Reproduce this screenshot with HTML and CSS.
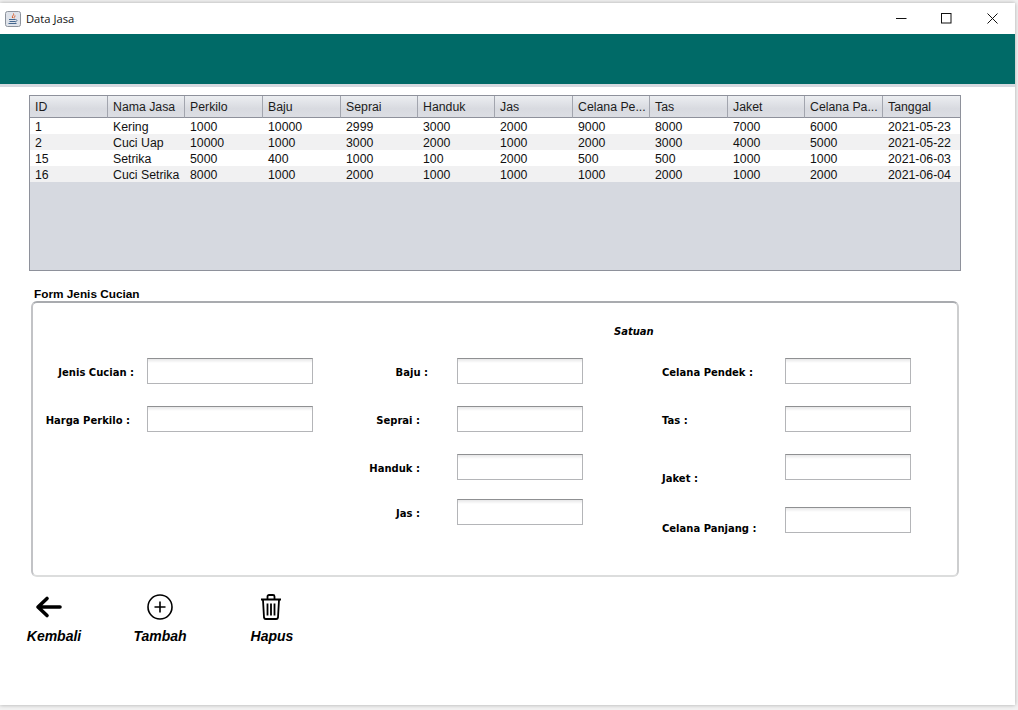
FILE: index.html
```html
<!DOCTYPE html>
<html lang="id">
<head>
<meta charset="utf-8">
<title>Data Jasa</title>
<link rel="stylesheet" href="styles.css">
</head>
<body>
<div class="window">
  <header class="titlebar">
    <svg class="app-icon" width="16" height="16" viewBox="0 0 16 16">
      <rect x="0.5" y="0.5" width="15" height="15" rx="2" fill="#dfe3ea" stroke="#8d939c"/>
      <path d="M8.5 2.5c1 1.5-2 2.5-1 4.5M10 4.5c.5 1-1.500 1.500-.8 2.800" fill="none" stroke="#d9541e" stroke-width="1"/>
      <path d="M4 8.500h6.500M4.500 10.500h6M3.500 12.500h8" fill="none" stroke="#44678f" stroke-width="1"/>
      <path d="M10.500 8.500c2 0 2 2-.5 2.500" fill="none" stroke="#44678f" stroke-width=".8"/>
    </svg>
    <span class="title-text">Data Jasa</span>
    <div class="controls">
      <svg class="ctl ctl-min" width="11" height="11" viewBox="0 0 11 11"><path d="M0 5.500h10.500" stroke="#111" stroke-width="1" fill="none"/></svg>
      <svg class="ctl ctl-max" width="11" height="11" viewBox="0 0 11 11"><rect x="0.500" y="0.500" width="9.500" height="9.500" stroke="#111" stroke-width="1" fill="none"/></svg>
      <svg class="ctl ctl-close" width="11" height="11" viewBox="0 0 11 11"><path d="M.5.500l10 10M10.500.500l-10 10" stroke="#111" stroke-width="1" fill="none"/></svg>
    </div>
  </header>
  <div class="banner"></div>
  <main class="content">
    <div class="table-wrap">
      <table class="data">
        <colgroup>
          <col class="w78"><col class="w77"><col class="w78"><col class="w78"><col class="w77"><col class="w77"><col class="w78"><col class="w77"><col class="w78"><col class="w77"><col class="w78"><col class="w77">
        </colgroup>
        <thead>
          <tr><th>ID</th><th>Nama Jasa</th><th>Perkilo</th><th>Baju</th><th>Seprai</th><th>Handuk</th><th>Jas</th><th>Celana Pe...</th><th>Tas</th><th>Jaket</th><th>Celana Pa...</th><th>Tanggal</th></tr>
        </thead>
        <tbody>
          <tr><td>1</td><td>Kering</td><td>1000</td><td>10000</td><td>2999</td><td>3000</td><td>2000</td><td>9000</td><td>8000</td><td>7000</td><td>6000</td><td>2021-05-23</td></tr>
          <tr><td>2</td><td>Cuci Uap</td><td>10000</td><td>1000</td><td>3000</td><td>2000</td><td>1000</td><td>2000</td><td>3000</td><td>4000</td><td>5000</td><td>2021-05-22</td></tr>
          <tr><td>15</td><td>Setrika</td><td>5000</td><td>400</td><td>1000</td><td>100</td><td>2000</td><td>500</td><td>500</td><td>1000</td><td>1000</td><td>2021-06-03</td></tr>
          <tr><td>16</td><td>Cuci Setrika</td><td>8000</td><td>1000</td><td>2000</td><td>1000</td><td>1000</td><td>1000</td><td>2000</td><td>1000</td><td>2000</td><td>2021-06-04</td></tr>
        </tbody>
      </table>
    </div>

    <h2 class="form-title">Form Jenis Cucian</h2>
    <section class="panel">
      <div class="satuan">Satuan</div>
      <div class="fields">
        <div class="col col-a">
          <div class="row"><label class="lbl lbl-jenis">Jenis Cucian :</label><input class="inp inp-wide" type="text"></div>
          <div class="row"><label class="lbl lbl-harga">Harga Perkilo :</label><input class="inp inp-wide" type="text"></div>
        </div>
        <div class="col col-b">
          <div class="row"><label class="lbl lbl-baju">Baju :</label><input class="inp" type="text"></div>
          <div class="row"><label class="lbl lbl-mid">Seprai :</label><input class="inp" type="text"></div>
          <div class="row"><label class="lbl lbl-mid">Handuk :</label><input class="inp" type="text"></div>
          <div class="row row-jas"><label class="lbl lbl-mid">Jas :</label><input class="inp" type="text"></div>
        </div>
        <div class="col col-c">
          <div class="row"><label class="lbl">Celana Pendek :</label><input class="inp" type="text"></div>
          <div class="row"><label class="lbl">Tas :</label><input class="inp" type="text"></div>
          <div class="row"><label class="lbl lbl-low">Jaket :</label><input class="inp" type="text"></div>
          <div class="row row-panjang"><label class="lbl lbl-lower">Celana Panjang :</label><input class="inp" type="text"></div>
        </div>
      </div>
    </section>

    <div class="actions">
      <button class="action act-back" type="button">
        <svg width="28" height="24" viewBox="0 0 28 24"><path d="M26 12H5M13 3.500l-9 8.500 9 8.500" fill="none" stroke="#000" stroke-width="3.600" stroke-linecap="round" stroke-linejoin="round"/></svg>
        <span>Kembali</span>
      </button>
      <button class="action act-add" type="button">
        <svg width="26" height="26" viewBox="0 0 26 26"><circle cx="13" cy="13" r="12" fill="none" stroke="#000" stroke-width="1.600"/><path d="M13 7.500v11M7.500 13h11" fill="none" stroke="#000" stroke-width="1.600"/></svg>
        <span>Tambah</span>
      </button>
      <button class="action act-del" type="button">
        <svg width="22" height="26" viewBox="0 0 22 26"><path d="M1 5.500h20M7.500 5V2.500a1.500 1.500 0 0 1 1.500-1.500h4a1.500 1.500 0 0 1 1.500 1.500V5" fill="none" stroke="#000" stroke-width="1.800"/><path d="M3 6l1 17.500a1.800 1.800 0 0 0 1.800 1.500h10.400a1.800 1.800 0 0 0 1.800-1.500L19 6" fill="none" stroke="#000" stroke-width="1.800"/><path d="M7.500 9.500v12M11 9.500v12M14.500 9.500v12" fill="none" stroke="#000" stroke-width="1.800"/></svg>
        <span>Hapus</span>
      </button>
    </div>
  </main>
</div>
</body>
</html>
```

FILE: styles.css
```css
* { box-sizing: border-box; }
html, body { margin: 0; padding: 0; }
body {
  width: 1018px;
  height: 710px;
  overflow: hidden;
  background: #f2f2f2;
  font-family: "Liberation Sans", Arial, sans-serif;
  color: #000;
}
.window {
  width: 1015px;
  height: 702px;
  margin-top: 3px;
  background: #fff;
  box-shadow: 0 0 4px rgba(0, 0, 0, .3);
  display: flex;
  flex-direction: column;
}
.titlebar {
  height: 31px;
  flex: none;
  display: flex;
  align-items: center;
  padding-left: 5px;
  background: #fff;
}
.app-icon { flex: none; }
.title-text {
  margin-left: 5px;
  font-family: "Open Sans", "Noto Sans", sans-serif;
  font-size: 11.200px;
  color: #111;
}
.controls { margin-left: auto; display: flex; align-items: center; height: 100%; padding-bottom: 1px; }
.ctl { flex: none; display: block; }
.ctl-min { margin-right: 34px; }
.ctl-max { margin-right: 35px; }
.ctl-close { margin-right: 17px; }
.banner { height: 50px; flex: none; background: #006a67; }
.content {
  flex: 1;
  border-top: 3px solid #d6d9df;
  padding: 8px 0 0 29px;
  display: flex;
  flex-direction: column;
  align-items: flex-start;
}
.table-wrap {
  width: 932px;
  height: 176px;
  background: #d6d9e0;
  border: 1px solid #8e919b;
  flex: none;
}
.data {
  width: 930px;
  table-layout: fixed;
  border-collapse: separate;
  border-spacing: 0;
  font-size: 12.300px;
  color: #111;
}
.w78 { width: 78px; }
.w77 { width: 77px; }
.data th {
  height: 22px;
  padding: 1px 0 0 5px;
  font-weight: normal;
  text-align: left;
  white-space: nowrap;
  overflow: hidden;
  border-right: 1px solid #a2a5ae;
  border-bottom: 1px solid #8e919b;
  background: linear-gradient(#eceef1, #d8dae0 60%, #dcdee3);
  color: #1c1c1c;
}
.data th:last-child { border-right: 0; }
.data td {
  height: 16px;
  padding: 3px 0 0 5px;
  vertical-align: top;
  white-space: nowrap;
  overflow: hidden;
  line-height: 13px;
}
.data tbody tr:nth-child(odd) { background: #fff; }
.data tbody tr:nth-child(even) { background: #f1f1f2; }
.form-title {
  margin: 16px 0 0 5px;
  font-size: 11.800px;
  line-height: 14px;
  font-weight: bold;
  color: #000;
}
.panel {
  width: 928px;
  height: 276px;
  margin: 0 0 0 2px;
  flex: none;
  border: 2px solid #cdcecf;
  border-top-color: #a9abaf;
  border-left-color: #c2c3c6;
  border-bottom-color: #dcdddd;
  border-radius: 6px;
  background: #fff;
  padding: 22px 0 0 0;
}
.satuan {
  margin-left: 581px;
  font-family: "DejaVu Sans", sans-serif;
  font-size: 10px;
  line-height: 14px;
  font-weight: bold;
  font-style: italic;
}
.fields { display: flex; margin-top: 19px; }
.col { display: flex; flex-direction: column; gap: 22px; flex: none; }
.col-a { width: 328px; }
.col-b { width: 278px; }
.col-c { width: 300px; margin-left: 23px; }
.row { display: flex; align-items: center; height: 26px; }
.row-jas { margin-top: -3px; }
.row-panjang { margin-top: 5px; }
.lbl {
  flex: none;
  font-family: "DejaVu Sans", sans-serif;
  font-size: 10px;
  line-height: 14px;
  font-weight: bold;
  color: #000;
  white-space: nowrap;
  margin-top: 4px;
}
.col-a .lbl { width: 114px; text-align: right; }
.col-b .lbl { width: 96px; text-align: right; }
.col-c .lbl { width: 123px; }
.col-a .lbl-jenis { padding-right: 13px; }
.col-a .lbl-harga { padding-right: 17px; }
.col-b .lbl-baju { padding-right: 29px; }
.col-b .lbl-mid { padding-right: 37px; }
.col-c .lbl-low { margin-top: 24px; }
.col-c .lbl-lower { margin-top: 18px; }
.inp {
  flex: none;
  width: 126px;
  height: 26px;
  border: 1px solid #b4b5b8;
  border-top: 1px solid #8f9092;
  background: linear-gradient(#e7e7e8, #fff 4px);
  padding: 0 4px;
  margin: 0;
  outline: 0;
  border-radius: 0;
}
.inp-wide { width: 166px; }
.actions { display: flex; margin-top: 17px; align-items: flex-start; height: 70px; }
.action {
  display: flex;
  flex-direction: column;
  align-items: center;
  border: 0;
  background: none;
  padding: 0;
  margin: 0;
  font-family: "Liberation Sans", Arial, sans-serif;
  font-size: 14px;
  font-weight: bold;
  font-style: italic;
  color: #000;
}
.action span { line-height: 16px; margin-top: 8px; }
.act-back { width: 56px; margin-left: -3px; }
.act-back svg { margin: 1px 0 1px -13px; }
.act-add { width: 56px; margin-left: 50px; }
.act-del { width: 44px; margin-left: 62px; }
.act-del svg { margin-left: -2px; }
```
